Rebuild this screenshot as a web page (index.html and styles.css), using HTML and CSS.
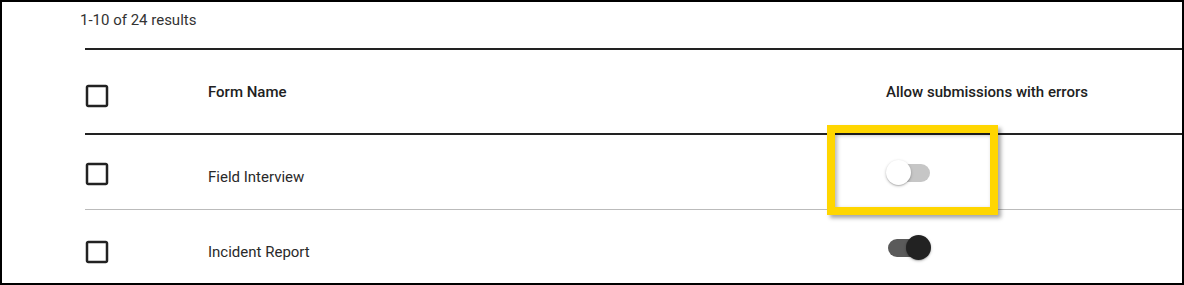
FILE: index.html
```html
<!DOCTYPE html>
<html>
<head>
<meta charset="utf-8">
<link rel="stylesheet" href="styles.css">
</head>
<body>
<div class="frame">
  <div class="results">1-10 of 24 results</div>
  <div class="table">
    <div class="row head">
      <svg class="cb" viewBox="0 0 24 24"><path d="M19 5v14H5V5h14m0-2H5c-1.1 0-2 .9-2 2v14c0 1.1.9 2 2 2h14c1.1 0 2-.9 2-2V5c0-1.1-.9-2-2-2z"/></svg>
      <div class="th">Form Name</div>
      <div class="th">Allow submissions with errors</div>
    </div>
    <div class="row r1">
      <svg class="cb" viewBox="0 0 24 24"><path d="M19 5v14H5V5h14m0-2H5c-1.1 0-2 .9-2 2v14c0 1.1.9 2 2 2h14c1.1 0 2-.9 2-2V5c0-1.1-.9-2-2-2z"/></svg>
      <div class="td">Field Interview</div>
      <div class="switch off"><span class="track"></span><span class="thumb"></span></div>
    </div>
    <div class="row r2">
      <svg class="cb" viewBox="0 0 24 24"><path d="M19 5v14H5V5h14m0-2H5c-1.1 0-2 .9-2 2v14c0 1.1.9 2 2 2h14c1.1 0 2-.9 2-2V5c0-1.1-.9-2-2-2z"/></svg>
      <div class="td">Incident Report</div>
      <div class="switch on"><span class="track"></span><span class="thumb"></span></div>
    </div>
  </div>
  <div class="highlight"></div>
</div>
</body>
</html>
```

FILE: styles.css
```css
html, body {
  margin: 0;
  padding: 0;
  background: #fff;
}
.frame {
  position: relative;
  width: 1184px;
  height: 285px;
  box-sizing: border-box;
  border: 2px solid #000;
  overflow: hidden;
  font-family: Roboto, "Liberation Sans", sans-serif;
  color: #222;
}
.results {
  padding: 9px 0 0 78px;
  height: 18px;
  line-height: 18px;
  font-size: 15px;
  color: #333;
}
.table {
  margin: 19px 0 0 83px;
  border-top: 2px solid #222;
}
.row {
  display: grid;
  grid-template-columns: 123px 678px 1fr;
  align-items: center;
}
.head {
  height: 83px;
  border-bottom: 2px solid #222;
}
.r1 {
  height: 74px;
  border-bottom: 1px solid #bbb;
}
.r2 {
  height: 74px;
}
.cb {
  width: 30px;
  height: 30px;
  margin-left: -3px;
  fill: #222;
}
.th {
  font-size: 15px;
  font-weight: 500;
  color: #212121;
  line-height: 18px;
}
.td {
  font-size: 15px;
  color: #2a2a2a;
  line-height: 18px;
  margin-top: 9px;
}
.head .cb { margin-top: 9px; }
.r1 .cb { margin-top: 3px; }
.r2 .cb { margin-top: 10px; }
.switch {
  position: relative;
  width: 45px;
  height: 25px;
  margin-top: 1px;
}
.track {
  position: absolute;
  left: 2px;
  right: 1px;
  top: 4px;
  height: 18px;
  border-radius: 9px;
}
.thumb {
  position: absolute;
  top: 0;
  width: 25px;
  height: 25px;
  border-radius: 50%;
  box-shadow: 0 1px 3px rgba(0,0,0,0.25), 0 1px 1px rgba(0,0,0,0.12);
}
.off .track { background: #c6c6c6; }
.off .thumb { left: 0; background: #fff; }
.on .track { background: #5a5a5a; }
.on .thumb { left: 20px; background: #222; }
.highlight {
  position: absolute;
  left: 825px;
  top: 123px;
  width: 171px;
  height: 90px;
  box-sizing: border-box;
  border: 8px solid #ffd600;
  box-shadow: 3px 3px 4px rgba(0,0,0,0.35), inset 2px 2px 4px rgba(0,0,0,0.3);
}
```
